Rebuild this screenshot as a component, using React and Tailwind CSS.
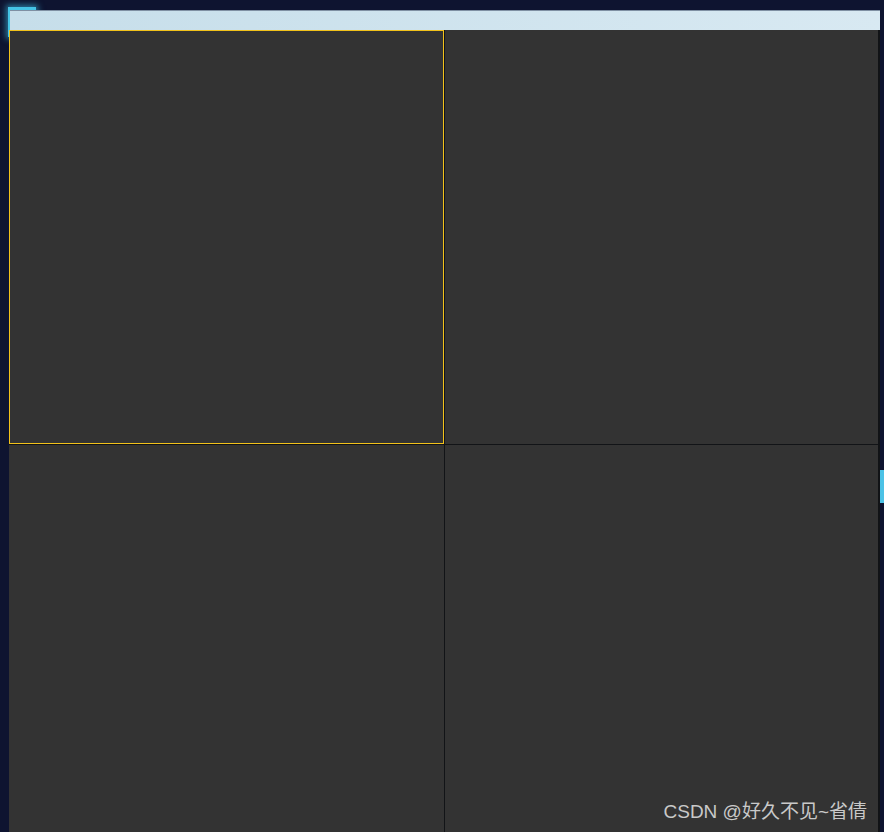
export default function App() {
  return (
    <div className="relative w-[884px] h-[832px] overflow-hidden bg-[#0e1430]" style={{ fontFamily: '"Liberation Sans", "Noto Sans CJK SC", sans-serif' }}>
      {/* corner glow */}
      <div className="absolute left-[8px] top-[7px] w-[28px] h-[30px] bg-[#45c4e6] shadow-[0_0_6px_2px_rgba(60,190,230,0.6)]" />

      <div className="relative pt-[10px] pl-[9px]">
        {/* header strip */}
        <div className="ml-[1px] w-[870px] h-[20px] border-t border-[#7f90a3] bg-gradient-to-r from-[#c6deea] to-[#d8e9f2]" />

        {/* video grid */}
        <div className="w-[871px] pr-[2px] bg-[#111316]">
          <div className="grid grid-cols-[435px_433px] grid-rows-[414px_414px] gap-[1px] bg-[#121417]">
            <div className="bg-[#333333] border border-[#f2c21b]" />
            <div className="bg-[#333333]" />
            <div className="bg-[#333333]" />
            <div className="bg-[#333333]" />
          </div>
        </div>
      </div>

      {/* side handle */}
      <div className="absolute left-[880px] top-[470px] w-[4px] h-[33px] bg-[#4cc2e6]" />

      {/* watermark */}
      <div className="absolute right-[17px] bottom-[11px] text-[19px] text-[#c9c9c9] leading-none">
        CSDN @好久不见~省倩
      </div>
    </div>
  );
}
